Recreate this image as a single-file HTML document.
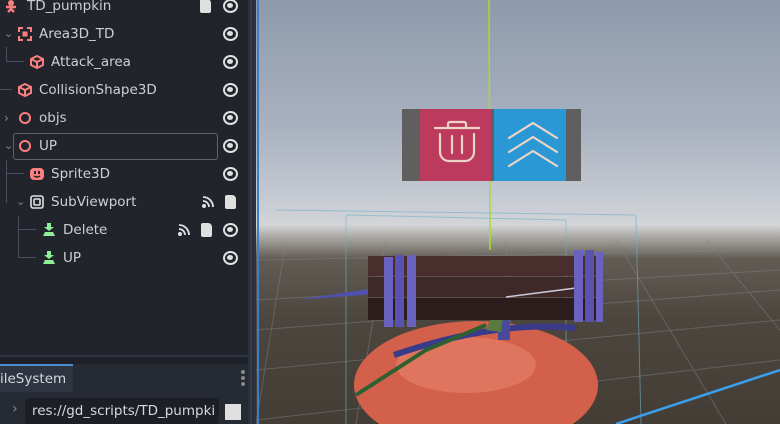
<!DOCTYPE html>
<html><head><style>
*{margin:0;padding:0;box-sizing:border-box}
body{width:780px;height:424px;overflow:hidden;background:#1d2026;font-family:"DejaVu Sans","Liberation Sans",sans-serif;position:relative}
#tree{position:absolute;left:0;top:0;width:248px;height:357px;background:#21252b;border-bottom:2px solid #2e3440}
#sep{position:absolute;left:248px;top:0;width:8px;height:424px;background:#2b303a}
#sepl{position:absolute;left:250px;top:0;width:2px;height:424px;background:#363d4a}
.row{position:absolute;left:0;height:28px;width:248px;color:#cdcfd3;font-size:13.5px;line-height:28px}
.row span.t{position:absolute}
.eye{position:absolute;left:223px;top:7px;width:15px;height:14px;border:2.5px solid #e0e0e0;border-radius:50%}
.eye:after{content:"";position:absolute;left:2px;top:2px;width:6px;height:5px;background:#e0e0e0;border-radius:50%}
.scr{position:absolute;top:7px;width:11px;height:14px;background:#e0e0e0;border-radius:2px 4px 2px 2px}
.ic{position:absolute;top:7px;width:14px;height:14px}
.ln{position:absolute;background:#4a5060}
#vp{position:absolute;left:256px;top:0;width:524px;height:424px;overflow:hidden;background:linear-gradient(#8e9aac 0%,#a8b1bf 30%,#c8ccd3 48%,#d3d5d8 53%,#aaa7a2 56%,#625c54 61%,#4c463e 75%,#433d36 100%)}
</style></head><body>
<div id="tree">
<div class="row" style="top:-8px"><svg class="ic" style="left:4px" viewBox="0 0 14 14"><circle cx="7" cy="4" r="3" fill="#fc7f7f"/><path d="M2 8h10M7 7v3l-3 3M7 10l3 3" stroke="#fc7f7f" stroke-width="2.4" fill="none"/></svg><span class="t" style="left:27px">TD_pumpkin</span><div class="scr" style="left:200px"></div><div class="eye"></div></div>
<div class="row" style="top:20px"><span class="t" style="left:4px;color:#888;font-size:11px">⌄</span><svg class="ic" style="left:18px" viewBox="0 0 14 14"><path d="M1 5V1h4M9 1h4v4M13 9v4H9M5 13H1V9" stroke="#fc7f7f" stroke-width="2" fill="none"/><rect x="4.5" y="4.5" width="5" height="5" fill="#fc7f7f"/></svg><span class="t" style="left:39px">Area3D_TD</span><div class="eye"></div></div>
<div class="ln" style="left:6px;top:47px;width:1px;height:14px"></div><div class="ln" style="left:6px;top:61px;width:18px;height:1px"></div>
<div class="row" style="top:48px"><svg class="ic" style="left:30px" viewBox="0 0 14 14"><path d="M7 1l6 3v6l-6 3-6-3V4zM1 4l6 3 6-3M7 7v6" stroke="#fc7f7f" stroke-width="2" fill="none"/></svg><span class="t" style="left:51px">Attack_area</span><div class="eye"></div></div>
<div class="ln" style="left:0;top:89px;width:12px;height:1px"></div>
<div class="row" style="top:76px"><svg class="ic" style="left:18px" viewBox="0 0 14 14"><path d="M7 1l6 3v6l-6 3-6-3V4zM1 4l6 3 6-3M7 7v6" stroke="#fc7f7f" stroke-width="2" fill="none"/></svg><span class="t" style="left:39px">CollisionShape3D</span><div class="eye"></div></div>
<div class="row" style="top:104px"><span class="t" style="left:4px;color:#888;font-size:12px">›</span><svg class="ic" style="left:18px" viewBox="0 0 14 14"><circle cx="7" cy="7" r="5" stroke="#fc7f7f" stroke-width="2" fill="none"/></svg><span class="t" style="left:39px">objs</span><div class="eye"></div></div>
<div style="position:absolute;left:13px;top:133px;width:205px;height:27px;border:1px solid #5c6270;border-radius:3px"></div>
<div class="row" style="top:132px"><span class="t" style="left:4px;color:#888;font-size:11px">⌄</span><svg class="ic" style="left:18px" viewBox="0 0 14 14"><circle cx="7" cy="7" r="5" stroke="#fc7f7f" stroke-width="2" fill="none"/></svg><span class="t" style="left:39px">UP</span><div class="eye"></div></div>
<div class="ln" style="left:6px;top:160px;width:1px;height:43px"></div><div class="ln" style="left:6px;top:173px;width:18px;height:1px"></div>
<div class="row" style="top:160px"><svg class="ic" style="left:30px" viewBox="0 0 14 14"><rect x="0" y="1" width="14" height="12" rx="4" fill="#fc7f7f"/><rect x="4" y="4" width="2" height="3" fill="#21252b"/><rect x="8" y="4" width="2" height="3" fill="#21252b"/><path d="M4 9q3 2 6 0" stroke="#21252b" stroke-width="1.4" fill="none"/></svg><span class="t" style="left:51px">Sprite3D</span><div class="eye"></div></div>
<div class="row" style="top:188px"><span class="t" style="left:16px;color:#888;font-size:11px">⌄</span><svg class="ic" style="left:30px" viewBox="0 0 14 14"><rect x="1" y="1" width="12" height="12" rx="2" stroke="#e0e0e0" stroke-width="1.6" fill="none"/><rect x="4" y="4" width="6" height="6" rx="1" stroke="#e0e0e0" stroke-width="1.6" fill="none"/></svg><span class="t" style="left:51px">SubViewport</span><svg class="ic" style="left:201px" viewBox="0 0 14 14"><circle cx="3" cy="11" r="2" fill="#e0e0e0"/><path d="M2 6a6 6 0 0 1 6 6M2 2a10 10 0 0 1 10 10" stroke="#e0e0e0" stroke-width="1.8" fill="none"/></svg><div class="scr" style="left:225px"></div></div>
<div class="ln" style="left:18px;top:216px;width:1px;height:42px"></div><div class="ln" style="left:18px;top:229px;width:18px;height:1px"></div><div class="ln" style="left:18px;top:257px;width:18px;height:1px"></div>
<div class="row" style="top:216px"><svg class="ic" style="left:42px" viewBox="0 0 14 14"><path d="M5 0h4v4h3l-5 4-5-4h3zM3 9h8l2 4H1z" fill="#8eef97"/></svg><span class="t" style="left:63px">Delete</span><svg class="ic" style="left:177px" viewBox="0 0 14 14"><circle cx="3" cy="11" r="2" fill="#e0e0e0"/><path d="M2 6a6 6 0 0 1 6 6M2 2a10 10 0 0 1 10 10" stroke="#e0e0e0" stroke-width="1.8" fill="none"/></svg><div class="scr" style="left:201px"></div><div class="eye"></div></div>
<div class="row" style="top:244px"><svg class="ic" style="left:42px" viewBox="0 0 14 14"><path d="M5 0h4v4h3l-5 4-5-4h3zM3 9h8l2 4H1z" fill="#8eef97"/></svg><span class="t" style="left:63px">UP</span><div class="eye"></div></div>
</div>
<div style="position:absolute;left:0;top:364px;width:248px;height:60px;background:#252a33"></div>
<div style="position:absolute;left:0;top:364px;width:73px;height:28px;background:#2e3440;border-top:2px solid #4a8ad2;color:#d6d8db;font-size:13.5px;line-height:26px">ileSystem</div>
<div style="position:absolute;left:241px;top:370px;width:4px;height:4px;border-radius:50%;background:#888;box-shadow:0 6px 0 #888,0 12px 0 #888"></div>
<div style="position:absolute;left:12px;top:401px;color:#888;font-size:14px">›</div>
<div style="position:absolute;left:25px;top:398px;width:194px;height:26px;background:#1c1f25;border-radius:3px;color:#d6d8db;font-size:13.5px;line-height:26px;padding-left:7px;white-space:nowrap;overflow:hidden">res://gd_scripts/TD_pumpki</div>
<div style="position:absolute;left:225px;top:404px;width:16px;height:16px;background:#e0e0e0"></div>
<div id="sep"></div><div id="sepl"></div>
<div id="vp">
<svg width="524" height="424" style="position:absolute;left:0;top:0">
<g stroke="#7d8a90" stroke-width="1" opacity=".45" fill="none">
<path d="M0 300L524 270M0 330L524 290M0 370L524 320M0 420L524 360M30 240L0 424M130 240L100 424M250 240L260 424M360 240L470 424M450 240L524 330M0 260L524 250"/>
</g>
<g stroke="#6fb0c8" stroke-width="1" opacity=".6" fill="none"><path d="M90 215L90 424M310 220L310 424M90 215L310 220M20 210L380 215M380 215L385 424"/></g>
<line x1="2" y1="0" x2="2" y2="424" stroke="#3a7fc8" stroke-width="2"/>
<line x1="233" y1="0" x2="234" y2="250" stroke="#a5e020" stroke-width="1.5"/>
<line x1="360" y1="424" x2="524" y2="370" stroke="#3aa0f0" stroke-width="2.5"/>
<ellipse cx="220" cy="385" rx="122" ry="64" fill="#d2604a"/>
<ellipse cx="210" cy="365" rx="70" ry="28" fill="#ec8a72" opacity=".5"/>
<path d="M138 355Q240 320 320 328" stroke="#3a3a8a" stroke-width="6" fill="none"/>
<rect x="242" y="300" width="12" height="40" fill="#4a4a9a"/>
<path d="M230 330l8-20h10l-3 22z" fill="#5a7a40"/>
<path d="M100 395l70-45 60-25" stroke="#2f6030" stroke-width="4" fill="none"/>
<path d="M40 300l80-12 0 6z" fill="#5050b0"/>
<rect x="112" y="256" width="232" height="20" fill="#4a2e2e"/>
<rect x="112" y="277" width="232" height="20" fill="#3e2828"/>
<rect x="112" y="298" width="232" height="22" fill="#2c1c1c"/>
<path d="M250 297L320 288" stroke="#ccd" stroke-width="1.5"/>
<rect x="128" y="257" width="9" height="70" fill="#6a62c0"/><rect x="139" y="255" width="9" height="72" fill="#5a52b0"/><rect x="151" y="255" width="9" height="72" fill="#6a62c0"/>
<rect x="318" y="250" width="9" height="72" fill="#6a62c0"/><rect x="329" y="250" width="9" height="72" fill="#5a52b0"/><rect x="340" y="252" width="7" height="70" fill="#6a62c0"/>
</svg>
<div style="position:absolute;left:146px;top:109px;width:179px;height:72px;background:#5f5f5f"></div>
<div style="position:absolute;left:164px;top:109px;width:71px;height:72px;background:#bb3a5d"></div>
<div style="position:absolute;left:238px;top:109px;width:72px;height:72px;background:#2b98d6"></div>
<svg style="position:absolute;left:164px;top:109px" width="146" height="72" viewBox="0 0 146 72" fill="none" stroke="#ecd4c6" stroke-width="2.2" stroke-linecap="round">
<path d="M15 19h44M28 19v-4a2 2 0 0 1 2-2h14a2 2 0 0 1 2 2v4M20 25v18a9 9 0 0 0 9 9h16a9 9 0 0 0 9-9V25M32 27v17M42 27v17"/>
<path d="M89 29l24-15 24 15M89 43l24-15 24 15M89 57l24-15 24 15"/>
</svg>
</div>
</body></html>
